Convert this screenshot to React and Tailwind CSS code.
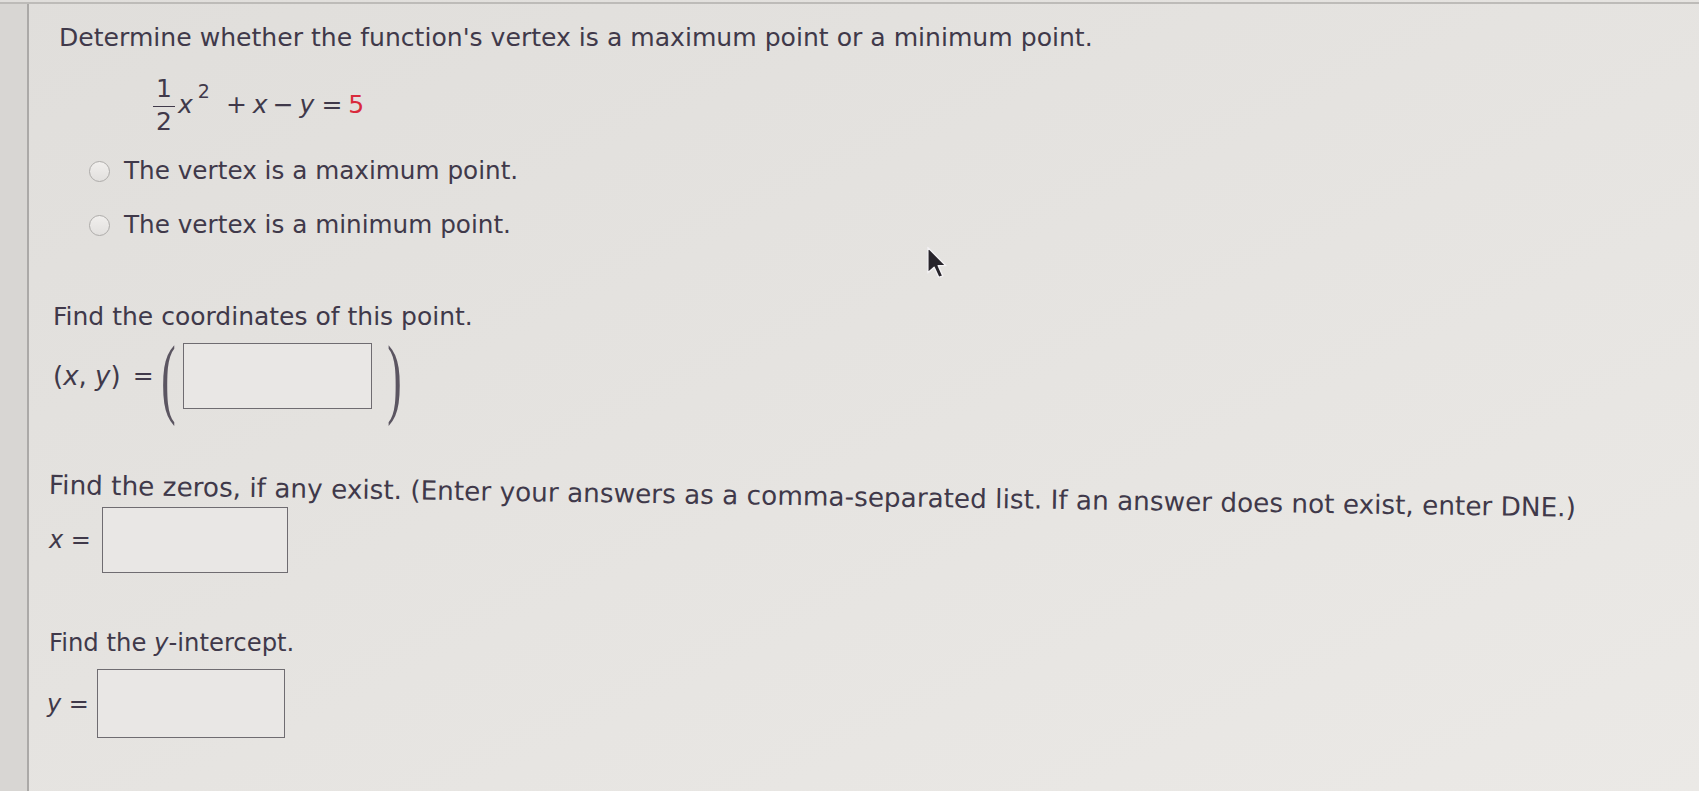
function Radio({ label }) {
  return (
    <div className="flex items-center h-[30px]">
      <span className="ml-[60px] w-[21px] h-[21px] rounded-full border border-[#aeacaa] bg-linear-to-b from-[#f1efed] to-[#e2e0de] shrink-0" />
      <span className="ml-[14px] leading-[30px] text-[24.7px]">{label}</span>
    </div>
  )
}

function AnswerBox({ className }) {
  return <div className={`border-[1.5px] border-[#6f6c71] bg-[#e9e7e5] shrink-0 ${className}`} />
}

function Paren({ children }) {
  return (
    <span className="inline-flex w-[20px] h-[76px] items-center justify-center">
      <span className="inline-block font-['Liberation_Serif',serif] font-light text-[32px] leading-none scale-x-[1.35] scale-y-[2.8] text-[#5b5561]">
        {children}
      </span>
    </span>
  )
}

function Cursor() {
  return (
    <svg className="absolute left-[926px] top-[246px]" width="21" height="33" viewBox="0 0 13 21">
      <path
        d="M1 1 L1 17 L5 13.5 L8 20 L10.5 19 L7.6 12.5 L12.5 12.5 Z"
        fill="#27242b"
        stroke="#f4f2f4"
        strokeWidth="0.9"
        strokeLinejoin="round"
      />
    </svg>
  )
}

export default function App() {
  return (
    <div className="relative w-full h-[791px] overflow-hidden pt-[2px] bg-linear-to-br from-[#e0dedb] to-[#ebe9e6] font-['DejaVu_Sans',Verdana,sans-serif] text-[24px] text-[#40394a]">
      <div className="flex h-[789px] border-t-2 border-[#bdbbb8]">
        <div className="w-[29px] shrink-0 bg-[#d8d6d3] border-r-2 border-[#aba9a7]" />
        <main className="flex-1 flex flex-col">
          <p className="mt-[19px] ml-[30px] leading-[30px] text-[25.1px] whitespace-nowrap">
            Determine whether the function's vertex is a maximum point or a minimum point.
          </p>

          {/* equation */}
          <div className="mt-[22px] ml-[124px] flex items-center h-[60px] text-[25px]">
            <span className="inline-flex flex-col items-center w-[22px]">
              <span className="leading-[26px]">1</span>
              <span className="w-full border-t-[1.5px] border-[#40394a] mt-[4px]" />
              <span className="leading-[26px] mt-[2px]">2</span>
            </span>
            <span className="ml-[3px] italic leading-[30px]">
              x<sup className="not-italic text-[19px] top-[-15px] ml-[5px]">2</sup>
            </span>
            <span className="ml-[16px] leading-[30px]">+</span>
            <span className="ml-[6px] italic leading-[30px]">x</span>
            <span className="ml-[5px] leading-[30px]">−</span>
            <span className="ml-[6px] italic leading-[30px]">y</span>
            <span className="ml-[7px] leading-[30px]">=</span>
            <span className="ml-[6px] leading-[30px] text-[#d92a3c]">5</span>
          </div>

          <div className="mt-[21px]">
            <Radio label="The vertex is a maximum point." />
          </div>
          <div className="mt-[24px]">
            <Radio label="The vertex is a minimum point." />
          </div>

          <p className="mt-[62px] ml-[24px] leading-[30px] text-[25px]">Find the coordinates of this point.</p>
          <div className="mt-[8px] ml-[24px] flex items-center h-[72px]">
            <span className="leading-[30px] text-[26px]">
              (<i>x</i>, <i>y</i>)
            </span>
            <span className="ml-[12px] leading-[30px] text-[25px]">=</span>
            <span className="ml-[5px]">
              <Paren>(</Paren>
            </span>
            <AnswerBox className="ml-[4px] w-[189px] h-[66px]" />
            <span className="ml-[13px]">
              <Paren>)</Paren>
            </span>
          </div>

          <p className="mt-[58px] ml-[20px] leading-[30px] text-[26.3px] whitespace-nowrap origin-left rotate-[0.85deg]">
            Find the zeros, if any exist. (Enter your answers as a comma-separated list. If an answer does not exist, enter DNE.)
          </p>
          <div className="mt-[7px] ml-[20px] flex items-center h-[66px]">
            <span className="leading-[30px]">
              <i>x</i> =
            </span>
            <AnswerBox className="ml-[11px] w-[186px] h-[66px]" />
          </div>

          <p className="mt-[55px] ml-[20px] leading-[30px] text-[24.3px]">
            Find the <i>y</i>-intercept.
          </p>
          <div className="mt-[11px] ml-[18px] flex items-center h-[69px]">
            <span className="leading-[30px]">
              <i>y</i> =
            </span>
            <AnswerBox className="ml-[8px] w-[188px] h-[69px]" />
          </div>
        </main>
      </div>
      <Cursor />
    </div>
  )
}
